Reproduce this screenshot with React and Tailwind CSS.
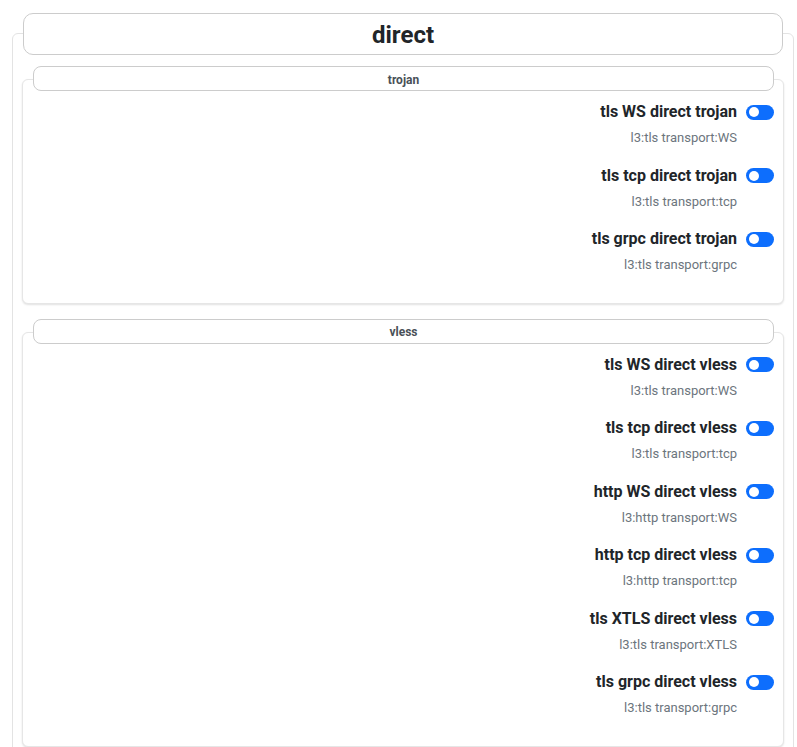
const groups = [
  {
    name: "trojan",
    items: [
      { title: "tls WS direct trojan", sub: "l3:tls transport:WS" },
      { title: "tls tcp direct trojan", sub: "l3:tls transport:tcp" },
      { title: "tls grpc direct trojan", sub: "l3:tls transport:grpc" },
    ],
  },
  {
    name: "vless",
    items: [
      { title: "tls WS direct vless", sub: "l3:tls transport:WS" },
      { title: "tls tcp direct vless", sub: "l3:tls transport:tcp" },
      { title: "http WS direct vless", sub: "l3:http transport:WS" },
      { title: "http tcp direct vless", sub: "l3:http transport:tcp" },
      { title: "tls XTLS direct vless", sub: "l3:tls transport:XTLS" },
      { title: "tls grpc direct vless", sub: "l3:tls transport:grpc" },
    ],
  },
];

function Toggle() {
  return (
    <span className="flex h-[15px] w-[28px] shrink-0 items-center rounded-full bg-[#0d6efd] pl-[3px]">
      <span className="h-[10px] w-[10px] rounded-full bg-white" />
    </span>
  );
}

function Group({ group, first }) {
  return (
    <div
      className={`${first ? "mt-6" : "mt-[28px]"} mx-[9px] rounded-md border border-[#e6e6e6] bg-white shadow-[0_1px_2px_rgba(0,0,0,0.12)]`}
    >
      <div className="-mt-[14px] ml-[10px] mr-[9px] flex h-[25px] items-center justify-center rounded-[8px] border border-[#cccccc] bg-white pt-[2px] text-[12px] font-bold text-[#495057]">
        {group.name}
      </div>
      <div className="pt-[9px] pb-[12px] pr-[9px]">
        {group.items.map((it) => (
          <div key={it.title} className="mb-[15.5px] flex flex-col items-end">
            <div className="flex h-6 items-center gap-[9px]">
              <span className="text-[16px] font-bold text-[#212529]">{it.title}</span>
              <Toggle />
            </div>
            <div className="mt-[4px] mr-[37px] text-[13px] leading-5 text-[#6c757d]">{it.sub}</div>
          </div>
        ))}
      </div>
    </div>
  );
}

export default function App() {
  return (
    <div className="min-h-screen bg-white pt-[33px] font-['Roboto',sans-serif]">
      <div className="ml-[12px] mr-[3px] rounded-md border border-[#e3e3e3] pb-6">
        <div className="-mt-[21px] mx-[10px] flex h-[42px] items-center justify-center rounded-[10px] border border-[#cccccc] bg-white pt-[2px] text-[24px] font-bold text-[#212529]">
          direct
        </div>
        {groups.map((g, i) => (
          <Group key={g.name} group={g} first={i === 0} />
        ))}
      </div>
    </div>
  );
}
